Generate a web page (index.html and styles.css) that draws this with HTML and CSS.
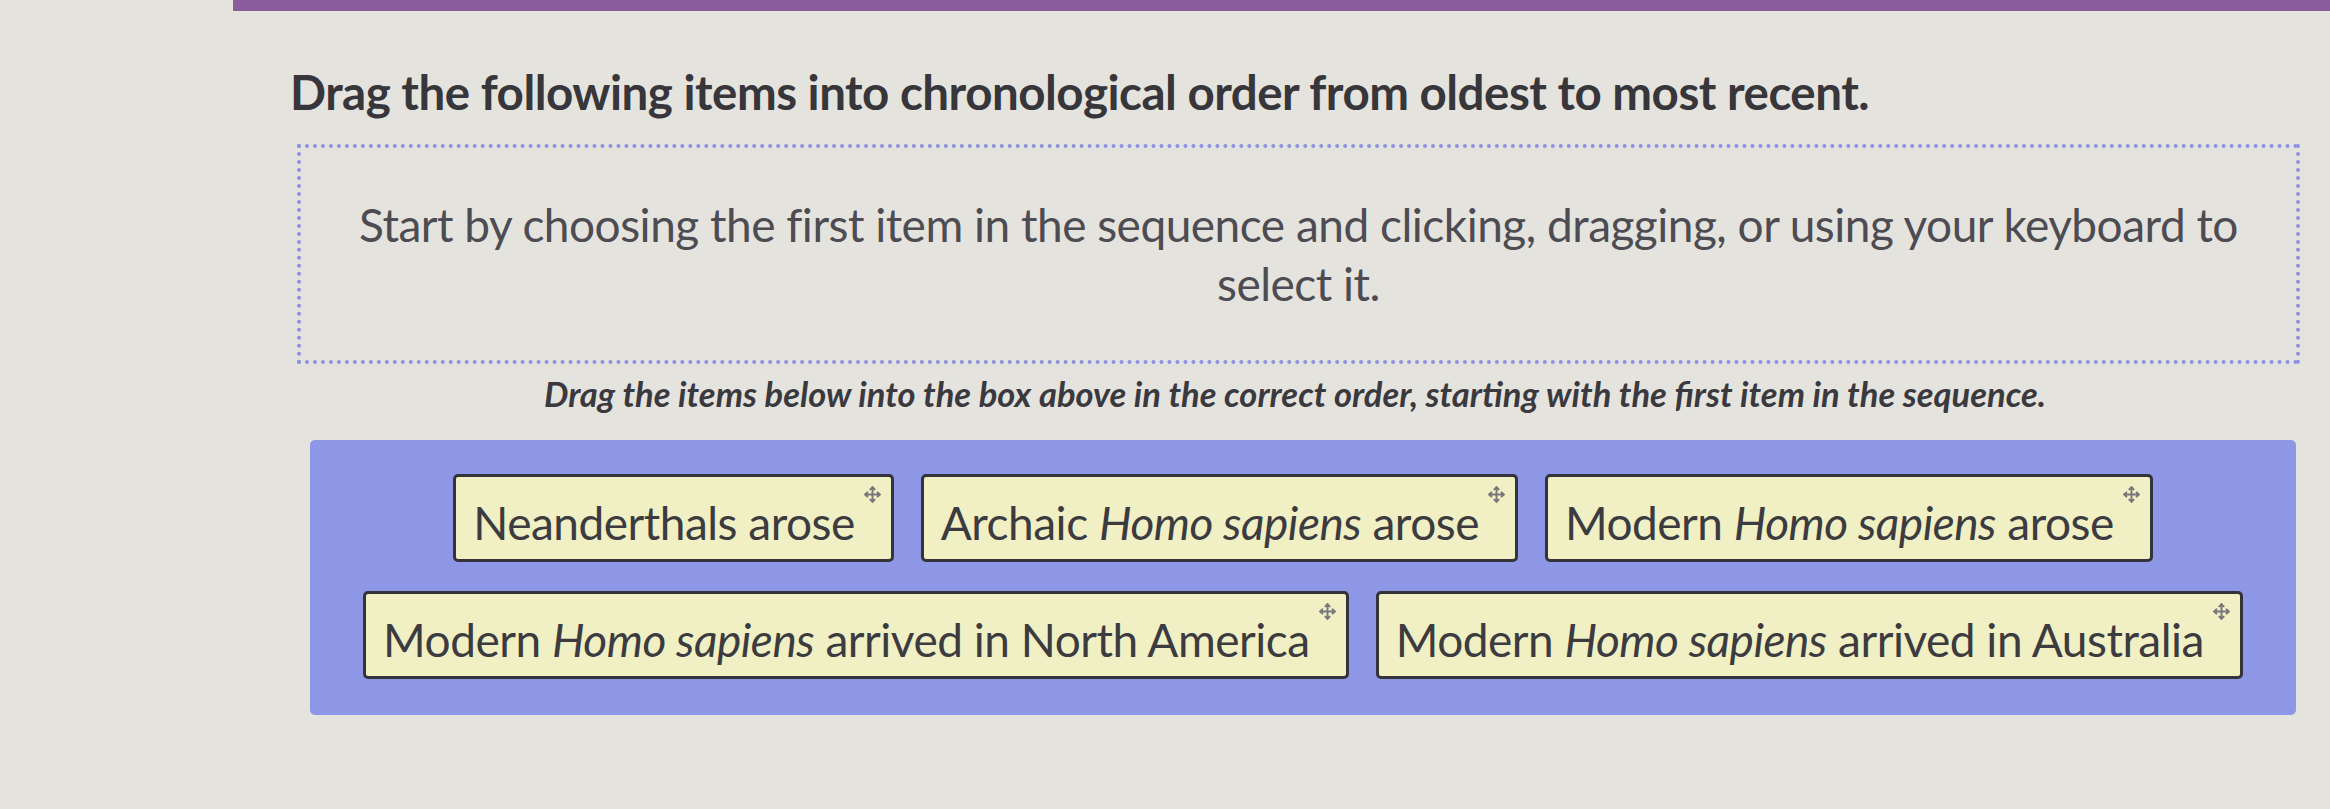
FILE: index.html
```html
<!DOCTYPE html>
<html lang="en">
<head>
<meta charset="utf-8">
<title>Ordering question</title>
<link rel="stylesheet" href="styles.css">
</head>
<body>
<div class="page">
  <div class="topbar"></div>
  <main class="question">
    <h1 class="prompt">Drag the following items into chronological order from oldest to most recent.</h1>
    <div class="dropzone">
      <p>Start by choosing the first item in the sequence and clicking, dragging, or using your keyboard to select it.</p>
    </div>
    <p class="hint">Drag the items below into the box above in the correct order, starting with the first item in the sequence.</p>
    <div class="bank">
      <div class="row">
        <div class="item">Neanderthals arose<svg class="grip" viewBox="0 0 16 16"><path d="M8 1v14M1 8h14M8 1l-2 2.2M8 1l2 2.2M8 15l-2-2.2M8 15l2-2.2M1 8l2.2-2M1 8l2.2 2M15 8l-2.2-2M15 8l-2.2 2"/></svg></div>
        <div class="item">Archaic <i>Homo sapiens</i> arose<svg class="grip" viewBox="0 0 16 16"><path d="M8 1v14M1 8h14M8 1l-2 2.2M8 1l2 2.2M8 15l-2-2.2M8 15l2-2.2M1 8l2.2-2M1 8l2.2 2M15 8l-2.2-2M15 8l-2.2 2"/></svg></div>
        <div class="item">Modern <i>Homo sapiens</i> arose<svg class="grip" viewBox="0 0 16 16"><path d="M8 1v14M1 8h14M8 1l-2 2.2M8 1l2 2.2M8 15l-2-2.2M8 15l2-2.2M1 8l2.2-2M1 8l2.2 2M15 8l-2.2-2M15 8l-2.2 2"/></svg></div>
      </div>
      <div class="row">
        <div class="item">Modern <i>Homo sapiens</i> arrived in North America<svg class="grip" viewBox="0 0 16 16"><path d="M8 1v14M1 8h14M8 1l-2 2.2M8 1l2 2.2M8 15l-2-2.2M8 15l2-2.2M1 8l2.2-2M1 8l2.2 2M15 8l-2.2-2M15 8l-2.2 2"/></svg></div>
        <div class="item">Modern <i>Homo sapiens</i> arrived in Australia<svg class="grip" viewBox="0 0 16 16"><path d="M8 1v14M1 8h14M8 1l-2 2.2M8 1l2 2.2M8 15l-2-2.2M8 15l2-2.2M1 8l2.2-2M1 8l2.2 2M15 8l-2.2-2M15 8l-2.2 2"/></svg></div>
      </div>
    </div>
  </main>
</div>
</body>
</html>
```
FILE: styles.css
```css
html, body {
  margin: 0;
  height: 100%;
}

body {
  background: #e5e3de;
  font-family: Lato, "Liberation Sans", sans-serif;
  color: #3b3a3f;
}

.page {
  min-height: 100%;
}

.topbar {
  margin-left: 233px;
  height: 11px;
  background: #8a5c9c;
}

.question {
  padding: 53px 30px 60px 290px;
}

.prompt {
  margin: 0 0 24px;
  font-size: 47.5px;
  font-weight: 700;
  letter-spacing: -0.5px;
  line-height: 56px;
  color: #37363b;
}

.dropzone {
  border: 4px dotted #8e92e2;
  padding: 47px 36px;
  margin-left: 7px;
  text-align: center;
}

.dropzone p {
  margin: 0;
  font-size: 46px;
  font-weight: 400;
  line-height: 59px;
  letter-spacing: -0.5px;
  color: #4d4c52;
}

.hint {
  margin: 10px 0 26px;
  text-align: center;
  font-size: 34.5px;
  font-weight: 700;
  font-style: italic;
  line-height: 40px;
  color: #3a393e;
}

.bank {
  margin: 0 4px 0 20px;
  background: #8e97e6;
  border-radius: 5px;
  padding: 34px 30px 36px;
  display: flex;
  flex-direction: column;
  gap: 29px;
}

.row {
  display: flex;
  justify-content: center;
  gap: 27px;
}

.item {
  position: relative;
  background: #f0f0c4;
  border: 3px solid #34333a;
  border-radius: 5px;
  padding: 20px 36px 10px 17px;
  font-size: 46px;
  line-height: 52px;
  letter-spacing: -0.5px;
  color: #3c3b40;
  white-space: nowrap;
}

.item i {
  font-style: italic;
}

.grip {
  position: absolute;
  top: 9px;
  right: 10px;
  width: 17px;
  height: 17px;
  fill: none;
  stroke: #77767a;
  stroke-width: 1.8;
  stroke-linecap: round;
}
```
